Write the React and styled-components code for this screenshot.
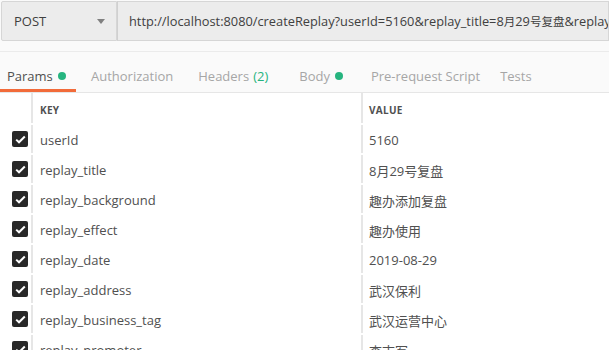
import React from 'react'
import styled, { createGlobalStyle } from 'styled-components'

const GlobalStyle = createGlobalStyle`
  html, body {
    margin: 0;
    padding: 0;
    background: #fafafa;
  }
  body {
    font-family: "Open Sans", "Noto Sans CJK SC", sans-serif;
  }
`

const Page = styled.div`
  width: 609px;
  height: 350px;
  overflow: hidden;
  background: #fafafa;
`

// request bar
const RequestBar = styled.div`
  display: flex;
  height: 40px;
  padding: 1px 0 0 1px;
`
const Method = styled.div`
  display: flex;
  align-items: center;
  justify-content: space-between;
  width: 116px;
  box-sizing: border-box;
  padding: 0 11px 0 12px;
  background: #ececec;
  border: 1px solid #d6d6d6;
  border-radius: 2px 0 0 2px;
  font-size: 13px;
  color: #404040;
`
const Caret = styled.span`
  width: 0;
  height: 0;
  border-left: 4px solid transparent;
  border-right: 4px solid transparent;
  border-top: 5px solid #808080;
`
const Url = styled.div`
  flex: 1;
  display: flex;
  align-items: center;
  padding-left: 11px;
  background: #ececec;
  border: 1px solid #d6d6d6;
  border-left: 1px solid #d0d0d0;
  font-size: 12.8px;
  color: #404040;
  white-space: nowrap;
  overflow: hidden;
`
const Cjk = styled.span`
  font-size: 11.5px;
`

// tabs
const Tabs = styled.div`
  display: flex;
  margin-top: 10px;
  height: 40px;
  border-top: 1px solid #ebebeb;
  border-bottom: 1px solid #e6e6e6;
`
const Tab = styled.div`
  display: flex;
  align-items: center;
  width: ${p => (p.$w ? `${p.$w}px` : 'auto')};
  padding: 10px 0 0 ${p => p.$pl}px;
  height: 100%;
  box-sizing: border-box;
  font-size: 13px;
  color: ${p => (p.$active ? '#505050' : '#a6a6a6')};
  border-bottom: 3px solid ${p => (p.$active ? '#f26b3a' : 'transparent')};
  white-space: nowrap;
`
const Dot = styled.span`
  width: 8px;
  height: 8px;
  border-radius: 50%;
  background: #26b47f;
  margin-left: 5px;
`
const Count = styled.span`
  color: #26b47f;
  margin-left: 4px;
`

// table
const Table = styled.div`
  background: #fff;
`
const Row = styled.div`
  display: grid;
  grid-template-columns: 31px 328px 1fr;
  column-gap: 2px;
  background: #e6e6e6;
  height: ${p => (p.$head ? 30 : 28)}px;
  margin-bottom: 2px;
`
const Cell = styled.div`
  display: flex;
  align-items: center;
  background: #fff;
  padding-left: ${p => p.$pl || 7}px;
  padding-top: ${p => p.$pt || 0}px;
  font-size: 13px;
  color: #505050;
  white-space: nowrap;
  overflow: hidden;
`
const HeadCell = styled(Cell)`
  font-size: 10px;
  font-weight: 700;
  color: #505050;
  letter-spacing: 0.3px;
  padding-top: 3px;
`
const Check = styled.div`
  width: 16px;
  height: 16px;
  border-radius: 2px;
  background: #282828;
  display: flex;
  align-items: center;
  justify-content: center;
`

const CheckIcon = () => (
  <svg width="11" height="9" viewBox="0 0 11 9">
    <path d="M1.2 4.6 L4 7.3 L9.8 1.5" fill="none" stroke="#fff" strokeWidth="2" />
  </svg>
)

const params = [
  ['userId', '5160'],
  ['replay_title', '8月29号复盘'],
  ['replay_background', '趣办添加复盘'],
  ['replay_effect', '趣办使用'],
  ['replay_date', '2019-08-29'],
  ['replay_address', '武汉保利'],
  ['replay_business_tag', '武汉运营中心'],
  ['replay_promoter', '李志军'],
]

const App = () => (
  <Page>
    <GlobalStyle />
    <RequestBar>
      <Method>
        POST
        <Caret />
      </Method>
      <Url>
        http://localhost:8080/createReplay?userId=5160&amp;replay_title=8<Cjk>月</Cjk>29<Cjk>号复盘</Cjk>&amp;replay_background=<Cjk>趣办添加复盘</Cjk>
      </Url>
    </RequestBar>

    <Tabs>
      <Tab $active $pl={7} $w={76}>
        Params
        <Dot />
      </Tab>
      <Tab $pl={15}>Authorization</Tab>
      <Tab $pl={25}>
        Headers
        <Count>(2)</Count>
      </Tab>
      <Tab $pl={31}>
        Body
        <Dot />
      </Tab>
      <Tab $pl={28}>Pre-request Script</Tab>
      <Tab $pl={20}>Tests</Tab>
    </Tabs>

    <Table>
      <Row $head>
        <Cell />
        <HeadCell>KEY</HeadCell>
        <HeadCell $pl={6}>VALUE</HeadCell>
      </Row>
      {params.map(([k, v]) => (
        <Row key={k}>
          <Cell $pl={12}>
            <Check>
              <CheckIcon />
            </Check>
          </Cell>
          <Cell $pt={2}>{k}</Cell>
          <Cell $pl={6} $pt={2}>{v}</Cell>
        </Row>
      ))}
    </Table>
  </Page>
)

export default App
